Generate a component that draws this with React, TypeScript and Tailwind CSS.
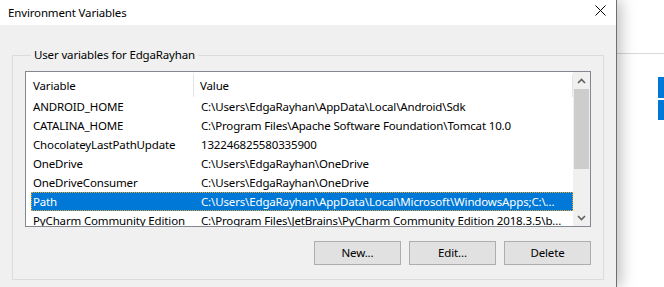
const rows = [
  ["ANDROID_HOME", "C:\\Users\\EdgaRayhan\\AppData\\Local\\Android\\Sdk"],
  ["CATALINA_HOME", "C:\\Program Files\\Apache Software Foundation\\Tomcat 10.0"],
  ["ChocolateyLastPathUpdate", "132246825580335900"],
  ["OneDrive", "C:\\Users\\EdgaRayhan\\OneDrive"],
  ["OneDriveConsumer", "C:\\Users\\EdgaRayhan\\OneDrive"],
  ["Path", "C:\\Users\\EdgaRayhan\\AppData\\Local\\Microsoft\\WindowsApps;C:\\..."],
  ["PyCharm Community Edition", "C:\\Program Files\\JetBrains\\PyCharm Community Edition 2018.3.5\\b..."],
];

function Button({ label }: { label: string }) {
  return (
    <button className="h-[24px] w-[87px] border border-[#adadad] bg-[#e1e1e1] leading-none text-black">
      {label}
    </button>
  );
}

export default function App() {
  return (
    <div className="flex h-[287px] w-[664px] overflow-hidden bg-white font-['Noto_Sans',sans-serif] text-[11.5px] tracking-[-0.15px] text-black">
      {/* dialog */}
      <div className="relative z-10 flex w-[617px] shrink-0 flex-col border-r border-[#6f6f6f] bg-[#f0f0f0] shadow-[4px_0_14px_rgba(0,0,0,0.25)]">
        <div className="flex h-[25px] shrink-0 items-center justify-between bg-white pl-[8px] pr-[10px]">
          <span className="leading-none">Environment Variables</span>
          <svg width="11" height="11" viewBox="0 0 11 11" className="mb-[5px]">
            <path d="M0.5 0.5 L10.5 10.5 M10.5 0.5 L0.5 10.5" stroke="#000" strokeWidth="1" />
          </svg>
        </div>

        <fieldset className="ml-[12px] mt-[22px] w-[592px] min-w-0 border border-[#dcdcdc] px-[12px] pb-[14px]">
          <legend className="ml-[6px] px-[3px] leading-[16px]">User variables for EdgaRayhan</legend>

          <div className="mt-[8px] flex h-[156px] min-w-0 border border-[#828790] bg-white">
            <div className="flex min-w-0 flex-1 flex-col overflow-hidden">
              <div className="flex h-[25px] shrink-0 items-center pt-[2px]">
                <div className="flex h-full w-[168px] items-center border-r border-[#e5e5e5] pl-[7px]">Variable</div>
                <div className="flex h-full flex-1 items-center border-r border-[#e5e5e5] pl-[6px]">Value</div>
              </div>
              {rows.map(([name, value]) => {
                const selected = name === "Path";
                return (
                  <div
                    key={name}
                    className={
                      selected
                        ? "ml-[5px] flex h-[19px] shrink-0 items-center border border-dotted border-[#f5a623] bg-[#0078d7] pt-[1px] text-white"
                        : "ml-[5px] flex h-[19px] shrink-0 items-center border border-transparent pt-[1px]"
                    }
                  >
                    <div className="w-[163px] shrink-0 whitespace-nowrap pl-[1px]">{name}</div>
                    <div className="min-w-0 flex-1 overflow-hidden whitespace-nowrap pl-[6px]">{value}</div>
                  </div>
                );
              })}
            </div>

            {/* scrollbar */}
            <div className="flex w-[17px] shrink-0 flex-col bg-[#f0f0f0]">
              <div className="flex h-[17px] items-center justify-center">
                <svg width="9" height="6" viewBox="0 0 9 6">
                  <path d="M1 5 L4.5 1.5 L8 5" fill="none" stroke="#606060" strokeWidth="1.6" />
                </svg>
              </div>
              <div className="mx-[1px] h-[80px] bg-[#cdcdcd]" />
              <div className="flex-1" />
              <div className="flex h-[17px] items-center justify-center">
                <svg width="9" height="6" viewBox="0 0 9 6">
                  <path d="M1 1 L4.5 4.5 L8 1" fill="none" stroke="#606060" strokeWidth="1.6" />
                </svg>
              </div>
            </div>
          </div>

          <div className="mt-[14px] flex justify-end gap-[8px]">
            <Button label="New..." />
            <Button label="Edit..." />
            <Button label="Delete" />
          </div>
        </fieldset>
      </div>

      {/* window behind */}
      <div className="flex flex-1 flex-col">
        <div className="mt-[53px] h-px bg-[#d9d9d9]" />
        <div className="ml-[41px] mt-[23px] h-[21px] bg-[#0078d7]" />
        <div className="ml-[41px] mt-[2px] h-[20px] bg-[#0078d7]" />
      </div>
    </div>
  );
}
